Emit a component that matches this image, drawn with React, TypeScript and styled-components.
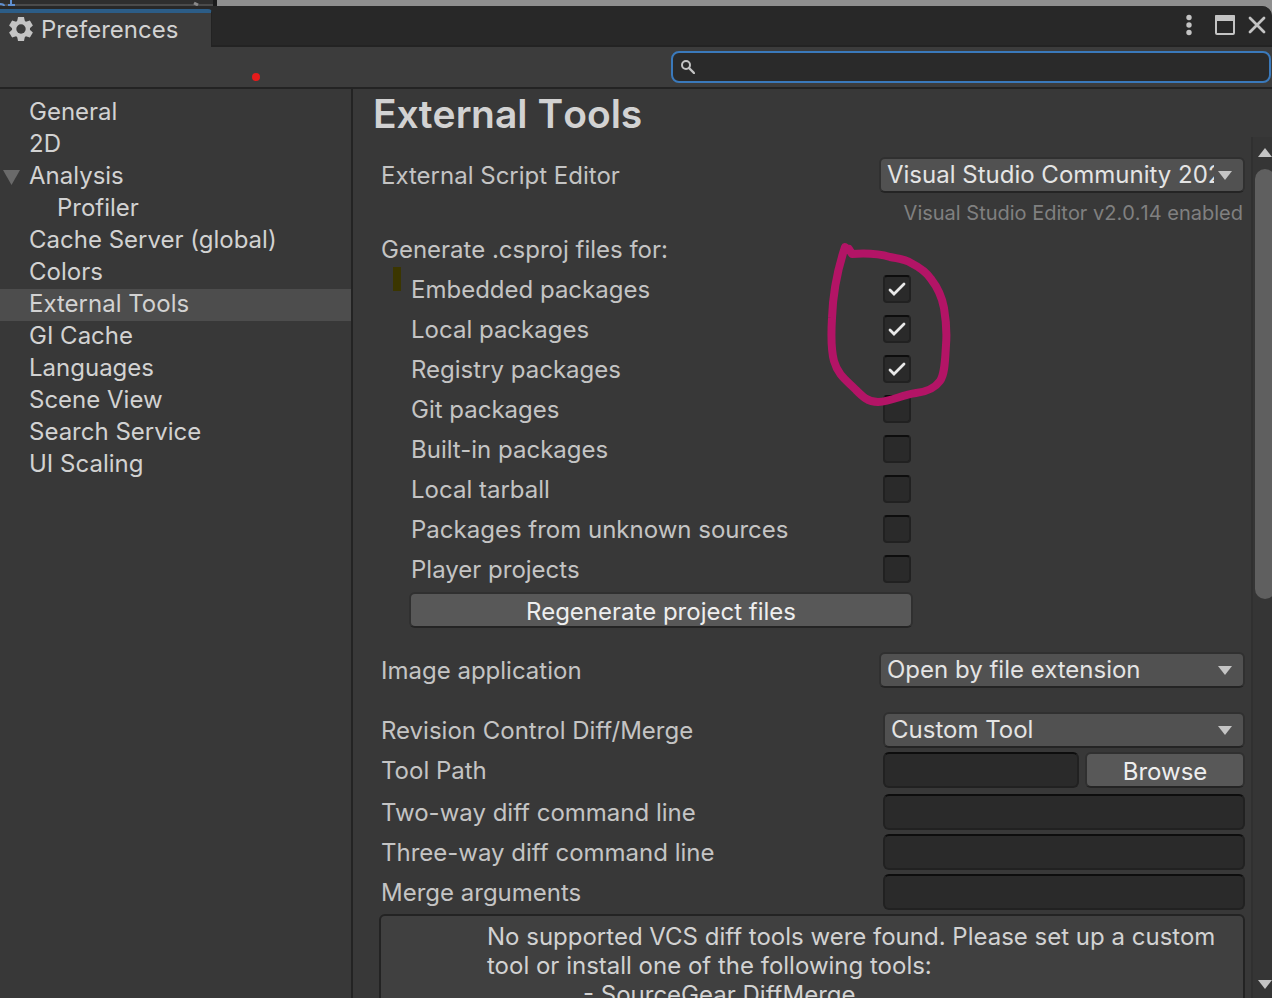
import React from "react";
import styled, { createGlobalStyle } from "styled-components";

const GlobalStyle = createGlobalStyle`
  *, *::before, *::after { box-sizing: border-box; }
  body {
    margin: 0;
    background: #383838;
    color: #c4c4c4;
    font-family: Inter, "Liberation Sans", sans-serif;
    font-size: 24px;
    line-height: 32px;
    overflow: hidden;
  }
  button, input, select { font: inherit; color: inherit; margin: 0; }
`;

const Screen = styled.div`
  display: flex;
  flex-direction: column;
  height: 100vh;
  background: #8f8f8f;
`;

const Backdrop = styled.div`
  display: flex;
  flex: 0 0 6px;
  background: #8f8f8f;
`;

const BackdropTab = styled.div`
  flex: 0 0 217px;
  height: 6px;
  background: #2e2e2e;
  border-right: 4px solid #1b1b1b;

  svg { display: block; }
`;

const Window = styled.div`
  display: flex;
  flex: 1;
  flex-direction: column;
  min-height: 0;
  background: #383838;
  border-top-right-radius: 10px;
  overflow: hidden;
`;

const TabBar = styled.header`
  display: flex;
  flex: 0 0 41px;
  background: #282828;
`;

const Tab = styled.div`
  display: flex;
  flex: 0 0 212px;
  align-items: center;
  gap: 7px;
  margin-top: 3px;
  padding: 0 0 2px 8px;
  background: #3c3c3c;
  border-top: 4px solid #2c5d87;
  border-right: 1px solid #232323;
  border-top-right-radius: 4px;
`;

const TabTitle = styled.h1`
  margin: 0;
  padding-top: 2px;
  font-size: 24px;
  font-weight: 400;
  line-height: 30px;
  color: #d2d2d2;
`;

const WindowActions = styled.div`
  display: flex;
  flex: 1;
  align-items: center;
  justify-content: flex-end;
  gap: 12px;
  padding: 0 5px 2px 0;
  border-bottom: 2px solid #232323;
`;

const IconButton = styled.button`
  display: flex;
  padding: 0;
  border: 0;
  background: none;
  color: #c4c4c4;
`;

const Toolbar = styled.div`
  position: relative;
  display: flex;
  flex: 0 0 42px;
  align-items: center;
  justify-content: flex-end;
  padding: 0 1px 0 0;
  background: #3c3c3c;
  border-bottom: 2px solid #232323;
`;

const RedDot = styled.span`
  position: absolute;
  left: 252px;
  top: 26px;
  width: 8px;
  height: 8px;
  border-radius: 50%;
  background: #e61b1b;
`;

const SearchBox = styled.label`
  display: flex;
  align-items: center;
  gap: 8px;
  flex: 0 0 600px;
  height: 32px;
  padding: 0 8px;
  background: #2a2a2a;
  border: 2px solid #3a79bb;
  border-radius: 8px;
`;

const SearchInput = styled.input`
  flex: 1;
  min-width: 0;
  height: 24px;
  padding: 0;
  border: 0;
  outline: 0;
  background: transparent;
`;

const Body = styled.div`
  display: flex;
  flex: 1;
  min-height: 0;
`;

const Sidebar = styled.nav`
  flex: 0 0 353px;
  padding-top: 8px;
  border-right: 2px solid #232323;
`;

const NavLink = styled.a<{ $active?: boolean; $nested?: boolean }>`
  display: flex;
  align-items: center;
  height: 32px;
  padding-bottom: 2px;
  padding-left: ${(p) => (p.$nested ? 57 : 29)}px;
  background: ${(p) => (p.$active ? "#4d4d4d" : "transparent")};
  color: #d2d2d2;
  text-decoration: none;
`;

const FoldoutLink = styled(NavLink)`
  gap: 9px;
  padding-left: 3px;
`;

const Main = styled.main`
  display: flex;
  flex: 1;
  flex-direction: column;
  min-width: 0;
`;

const Title = styled.h2`
  flex: 0 0 48px;
  margin: 0;
  padding: 2px 0 0 20px;
  font-size: 39px;
  font-weight: 600;
  line-height: 46px;
  font-kerning: none;
  color: #d2d2d2;
`;

const ScrollRegion = styled.div`
  display: flex;
  flex: 1;
  min-height: 0;
`;

const Settings = styled.form`
  flex: 1;
  min-width: 0;
  padding: 18px 6px 0 28px;
  overflow: hidden;
`;

const Group = styled.section`
  position: relative;
  margin-bottom: 20px;
`;

const Row = styled.div<{ $indent?: boolean }>`
  display: grid;
  grid-template-columns: ${(p) => (p.$indent ? 472 : 498)}px minmax(0, 1fr);
  align-items: center;
  height: 40px;
  padding-left: ${(p) => (p.$indent ? 30 : 0)}px;

  > label, > span { padding-top: 2px; }
`;

const Note = styled.p`
  margin: 0;
  padding-right: 2px;
  height: 34px;
  font-size: 20px;
  line-height: 36px;
  font-kerning: none;
  text-align: right;
  color: #808080;
`;

const SelectFrame = styled.div<{ $inset?: boolean }>`
  position: relative;
  margin: 0 0 0 ${(p) => (p.$inset ? 4 : 0)}px;

  svg {
    position: absolute;
    right: 13px;
    top: 14px;
    pointer-events: none;
  }
`;

const Select = styled.select`
  display: block;
  width: 100%;
  height: 36px;
  padding: 0 29px 2px 6px;
  appearance: none;
  background: #515151;
  border: 2px solid #303030;
  border-bottom-color: #242424;
  border-radius: 6px;
  color: #e4e4e4;
`;

const Checkbox = styled.input`
  appearance: none;
  width: 28px;
  height: 28px;
  background: #2a2a2a;
  border: 2px solid #212121;
  border-top-color: #0d0d0d;
  border-radius: 4px;
`;

const CheckCell = styled.div`
  position: relative;
  display: flex;

  svg {
    position: absolute;
    left: 5px;
    top: 7px;
    pointer-events: none;
  }
`;

const TextField = styled.input`
  flex: 1;
  min-width: 0;
  height: 36px;
  padding: 0 6px;
  background: #2a2a2a;
  border: 2px solid #212121;
  border-top-color: #0d0d0d;
  border-radius: 6px;
`;

const FieldCell = styled.div`
  display: flex;
  align-items: center;
  gap: 6px;
  padding-left: 4px;
`;

const Button = styled.button<{ $wide?: boolean }>`
  flex: none;
  width: ${(p) => (p.$wide ? 504 : 160)}px;
  height: 36px;
  padding: 2px 0 0;
  background: #585858;
  border: 2px solid #303030;
  border-bottom-color: #242424;
  border-radius: 6px;
  color: #eeeeee;
`;

const ButtonRow = styled.div`
  display: flex;
  align-items: center;
  height: 41px;
  padding-left: 28px;
`;

const Commands = styled.div`
  padding: 2px 0;
`;

const HelpBox = styled.div`
  margin-left: -2px;
  padding: 6px 8px 40px 106px;
  background: #404040;
  border: 2px solid #232323;
  border-radius: 6px;
  color: #d2d2d2;
  line-height: 29px;
  white-space: nowrap;

  p { margin: 0; }
  ul { margin: 0; padding: 0 0 0 96px; list-style: none; }
`;

const OliveMark = styled.span`
  position: absolute;
  left: 12px;
  top: 38px;
  width: 8px;
  height: 24px;
  background: #3b3600;
`;

const Scribble = styled.svg`
  position: absolute;
  left: 439px;
  top: 1px;
  pointer-events: none;
`;

const Scrollbar = styled.div`
  display: flex;
  flex: 0 0 21px;
  flex-direction: column;
  align-items: flex-start;
  padding: 11px 0 9px 4px;
  background: #353535;
  border-left: 2px solid #303030;
  overflow: hidden;

  svg { flex: none; margin-left: 1px; }
`;

const Track = styled.div`
  flex: 1;
  margin-top: 12px;
`;

const Thumb = styled.div`
  width: 20px;
  height: 53%;
  margin-left: -2px;
  background: #5f5f5f;
  border-radius: 10px;
`;

const DownArrow = ({ color = "#c4c4c4" }: { color?: string }) => (
  <svg width="14" height="9" viewBox="0 0 14 9" aria-hidden="true">
    <path d="M0 0H14L7 9Z" fill={color} />
  </svg>
);

const UpArrow = () => (
  <svg width="14" height="9" viewBox="0 0 14 9" aria-hidden="true">
    <path d="M0 9H14L7 0Z" fill="#c4c4c4" />
  </svg>
);

const Gear = () => (
  <svg width="26" height="26" viewBox="-13 -13 26 26" aria-hidden="true">
    <g fill="#c4c4c4">
      {[0, 60, 120].map((a) => (
        <path key={a} transform={`rotate(${a})`} d="M-3 -12H3L4 -7V7L3 12H-3L-4 7V-7Z" />
      ))}
    </g>
    <circle r="6.8" fill="none" stroke="#c4c4c4" strokeWidth="4.4" />
    <circle r="4.7" fill="#3c3c3c" />
  </svg>
);

const SearchIcon = () => (
  <svg width="14" height="14" viewBox="0 0 14 14" fill="none" stroke="#c4c4c4" aria-hidden="true">
    <circle cx="5" cy="5" r="4" strokeWidth="2" />
    <path d="M8 8L13 13" strokeWidth="2.4" strokeLinecap="round" />
  </svg>
);

const Tick = () => (
  <svg width="18" height="14" viewBox="0 0 18 14" fill="none" aria-hidden="true">
    <path d="M2 8L6 12L16 2" stroke="#e8e8e8" strokeWidth="2.8" strokeLinecap="round" />
  </svg>
);

const navItems = [
  { label: "General" },
  { label: "2D" },
  { label: "Analysis", foldout: true },
  { label: "Profiler", nested: true },
  { label: "Cache Server (global)" },
  { label: "Colors" },
  { label: "External Tools", active: true },
  { label: "GI Cache" },
  { label: "Languages" },
  { label: "Scene View" },
  { label: "Search Service" },
  { label: "UI Scaling" },
];

const packages = [
  { label: "Embedded packages", on: true },
  { label: "Local packages", on: true },
  { label: "Registry packages", on: true },
  { label: "Git packages", on: false },
  { label: "Built-in packages", on: false },
  { label: "Local tarball", on: false },
  { label: "Packages from unknown sources", on: false },
  { label: "Player projects", on: false },
];

const commandFields = ["Two-way diff command line", "Three-way diff command line", "Merge arguments"];

const SelectRow = ({ id, label, value, inset }: { id: string; label: string; value: string; inset?: boolean }) => (
  <Row>
    <label htmlFor={id}>{label}</label>
    <SelectFrame $inset={inset}>
      <Select id={id} defaultValue={value}>
        <option>{value}</option>
      </Select>
      <DownArrow />
    </SelectFrame>
  </Row>
);

const PackageRow = ({ id, label, on }: { id: string; label: string; on: boolean }) => {
  const [checked, setChecked] = React.useState(on);
  return (
    <Row $indent>
      <label htmlFor={id}>{label}</label>
      <CheckCell>
        <Checkbox id={id} type="checkbox" checked={checked} onChange={(e) => setChecked(e.target.checked)} />
        {checked && <Tick />}
      </CheckCell>
    </Row>
  );
};

export default function App() {
  return (
    <Screen>
      <GlobalStyle />
      <Backdrop>
        <BackdropTab>
          <svg width="213" height="6" viewBox="0 0 213 6" fill="none" aria-hidden="true">
            <path d="M0 5H213" stroke="#4b4b4b" strokeWidth="2" />
            <path d="M0 4Q4 4 4 6M11 0V5M8 5H15" stroke="#5f8fd0" strokeWidth="2" />
            <path d="M194 3L198 5" stroke="#8a8a8a" strokeWidth="3" />
          </svg>
        </BackdropTab>
      </Backdrop>
      <Window>
        <TabBar>
          <Tab>
            <Gear />
            <TabTitle>Preferences</TabTitle>
          </Tab>
          <WindowActions>
            <IconButton type="button" aria-label="Menu">
              <svg width="28" height="22" viewBox="0 0 28 22" fill="currentColor" aria-hidden="true">
                <circle cx="14" cy="3.5" r="2.7" />
                <circle cx="14" cy="11" r="2.7" />
                <circle cx="14" cy="18.5" r="2.7" />
              </svg>
            </IconButton>
            <IconButton type="button" aria-label="Maximize">
              <svg width="20" height="20" viewBox="0 0 20 20" aria-hidden="true">
                <rect x="1" y="1" width="18" height="18" rx="1" fill="none" stroke="currentColor" strokeWidth="2" />
                <rect x="0" y="0" width="20" height="6" rx="1" fill="currentColor" />
              </svg>
            </IconButton>
            <IconButton type="button" aria-label="Close">
              <svg width="20" height="20" viewBox="0 0 20 20" fill="none" stroke="currentColor" strokeWidth="2.8" strokeLinecap="round" aria-hidden="true">
                <path d="M3 3L17 17M17 3L3 17" />
              </svg>
            </IconButton>
          </WindowActions>
        </TabBar>
        <Toolbar>
          <RedDot />
          <SearchBox>
            <SearchIcon />
            <SearchInput type="text" aria-label="Search" />
          </SearchBox>
        </Toolbar>
        <Body>
          <Sidebar>
            {navItems.map((item) =>
              item.foldout ? (
                <FoldoutLink key={item.label} href="#">
                  <svg width="17" height="18" viewBox="0 0 17 18" aria-hidden="true">
                    <path d="M0 3H17L8.500 18Z" fill="#6a6a6a" />
                  </svg>
                  {item.label}
                </FoldoutLink>
              ) : (
                <NavLink key={item.label} href="#" $active={item.active} $nested={item.nested}>
                  {item.label}
                </NavLink>
              )
            )}
          </Sidebar>
          <Main>
            <Title>External Tools</Title>
            <ScrollRegion>
              <Settings>
                <SelectRow id="script-editor" label="External Script Editor" value="Visual Studio Community 2022" />
                <Note>Visual Studio Editor v2.0.14 enabled</Note>
                <Group>
                  <Row>
                    <span>Generate .csproj files for:</span>
                  </Row>
                  <OliveMark />
                  {packages.map((p, i) => (
                    <PackageRow key={p.label} id={`package-${i}`} label={p.label} on={p.on} />
                  ))}
                  <ButtonRow>
                    <Button type="button" $wide>Regenerate project files</Button>
                  </ButtonRow>
                  <Scribble width="140" height="190" viewBox="820 230 140 190" fill="none" aria-hidden="true">
                    <path
                      d="M849 249L852 254C866 253 880 254 890 257C900 259 905 259 911 263C919 267 927 273 931 279C938 288 942 297 944 308C946 320 947 333 946 345C945 360 945 374 940 381C935 388 925 392 916 393C901 395 893 401 878 402C867 402 861 395 855 389C846 380 838 375 834 361C831 350 831 335 832 318C833 290 838 268 845 247"
                      stroke="#b31466"
                      strokeWidth="8"
                      strokeLinecap="round"
                      strokeLinejoin="round"
                    />
                  </Scribble>
                </Group>
                <Group>
                  <SelectRow id="image-app" label="Image application" value="Open by file extension" />
                </Group>
                <SelectRow id="diff-merge" label="Revision Control Diff/Merge" value="Custom Tool" inset />
                <Row>
                  <label htmlFor="tool-path">Tool Path</label>
                  <FieldCell>
                    <TextField id="tool-path" type="text" />
                    <Button type="button">Browse</Button>
                  </FieldCell>
                </Row>
                <Commands>
                  {commandFields.map((label, i) => (
                    <Row key={label}>
                      <label htmlFor={`command-${i}`}>{label}</label>
                      <FieldCell>
                        <TextField id={`command-${i}`} type="text" />
                      </FieldCell>
                    </Row>
                  ))}
                </Commands>
                <HelpBox>
                  <p>
                    No supported VCS diff tools were found. Please set up a custom
                    <br />
                    tool or install one of the following tools:
                  </p>
                  <ul>
                    <li>- SourceGear DiffMerge</li>
                  </ul>
                </HelpBox>
              </Settings>
              <Scrollbar>
                <UpArrow />
                <Track>
                  <Thumb />
                </Track>
                <DownArrow />
              </Scrollbar>
            </ScrollRegion>
          </Main>
        </Body>
      </Window>
    </Screen>
  );
}
